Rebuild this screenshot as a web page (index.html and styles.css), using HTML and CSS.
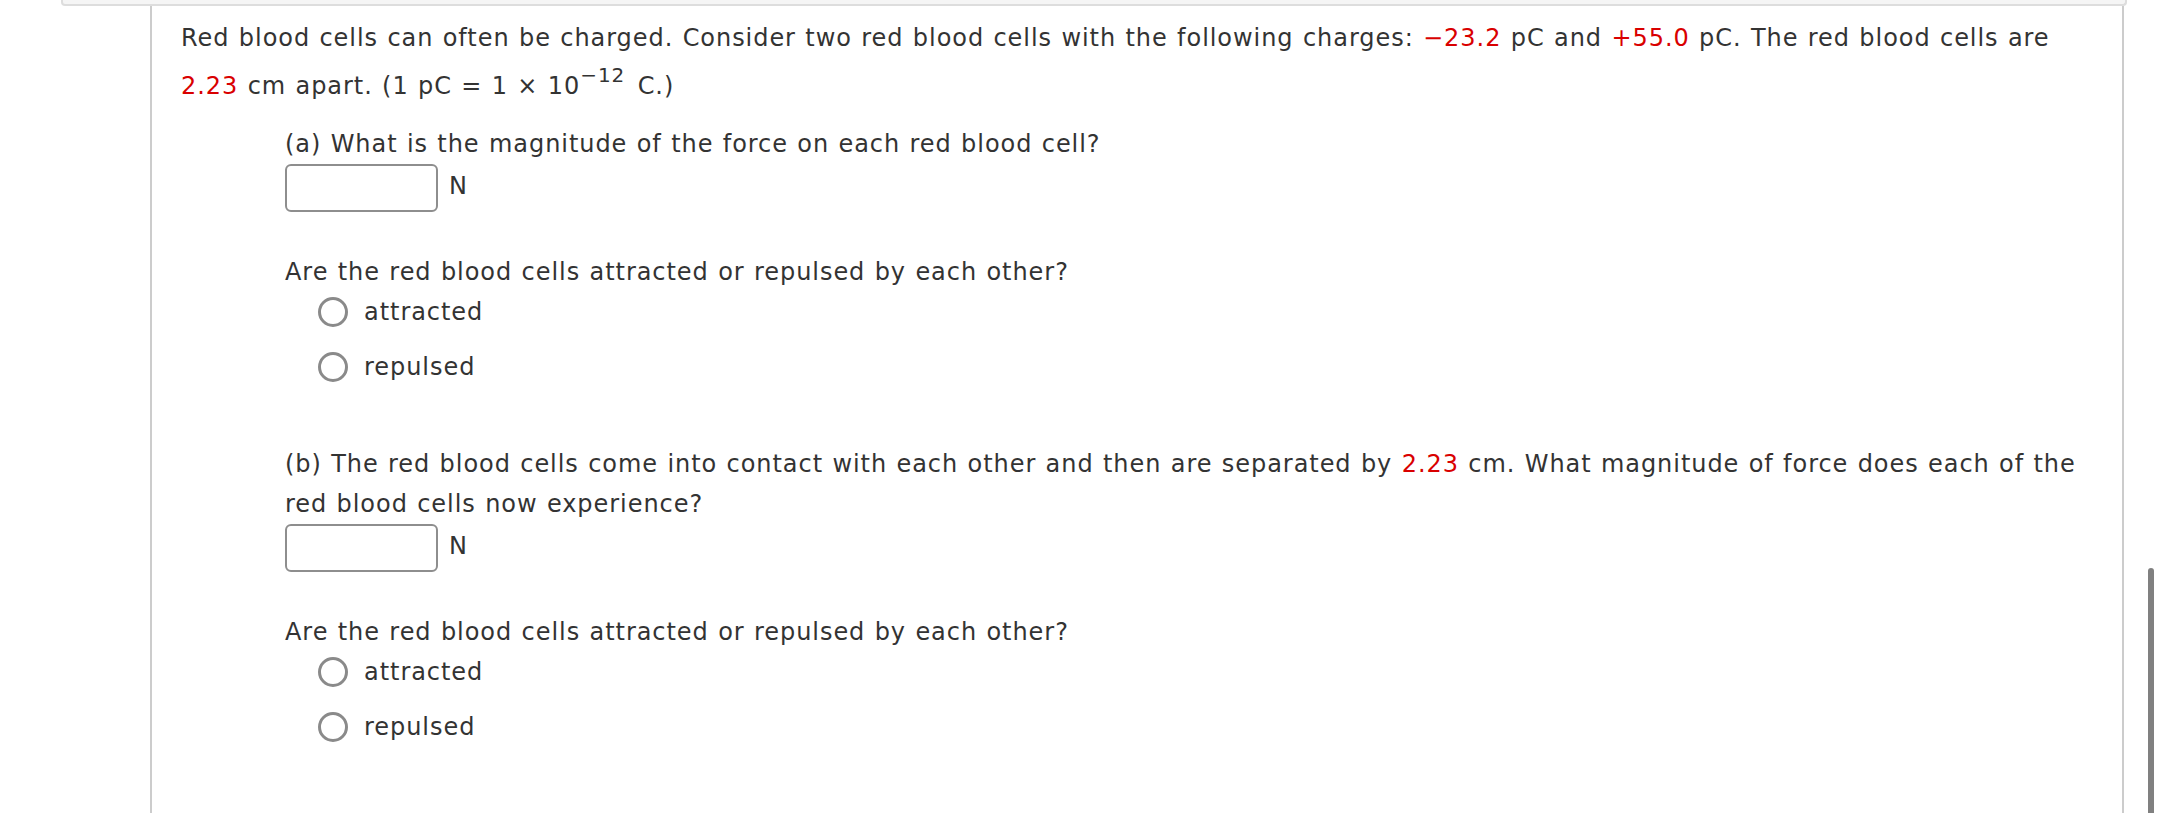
FILE: index.html
```html
<!DOCTYPE html>
<html lang="en">
<head>
<meta charset="utf-8">
<title>Red blood cells</title>
<link rel="stylesheet" href="styles.css">
</head>
<body>
<div class="topbar"></div>
<main class="panel">
  <p class="intro">Red blood cells can often be charged. Consider two red blood cells with the following charges: <span class="val">&minus;23.2</span> pC and <span class="val">+55.0</span> pC. The red blood cells are<br><span class="val">2.23</span> cm apart. (1 pC = 1 &times; 10<sup class="sup">&minus;12</sup> C.)</p>

  <section class="part part-a">
    <p class="line">(a) What is the magnitude of the force on each red blood cell?</p>
    <div class="answer"><span class="box"></span><span class="unit">N</span></div>
    <p class="line question">Are the red blood cells attracted or repulsed by each other?</p>
    <div class="options">
      <label class="option"><span class="radio"></span><span>attracted</span></label>
      <label class="option"><span class="radio"></span><span>repulsed</span></label>
    </div>
  </section>

  <section class="part part-b">
    <p class="line">(b) The red blood cells come into contact with each other and then are separated by <span class="val">2.23</span> cm. What magnitude of force does each of the<br>red blood cells now experience?</p>
    <div class="answer"><span class="box"></span><span class="unit">N</span></div>
    <p class="line question">Are the red blood cells attracted or repulsed by each other?</p>
    <div class="options">
      <label class="option"><span class="radio"></span><span>attracted</span></label>
      <label class="option"><span class="radio"></span><span>repulsed</span></label>
    </div>
  </section>
</main>
<div class="scroll-thumb"></div>
</body>
</html>
```

FILE: styles.css
```css
html, body {
  margin: 0;
  padding: 0;
  background: #ffffff;
  height: 100%;
  overflow: hidden;
}
body {
  font-family: "DejaVu Sans", Verdana, sans-serif;
  font-size: 24px;
  letter-spacing: 0.95px;
  word-spacing: 0.8px;
  color: #333333;
  position: relative;
}
.topbar {
  margin-left: 61px;
  width: 2062px;
  height: 4px;
  background: #f5f5f5;
  border: 2px solid #dddddd;
  border-top: none;
  border-radius: 0 0 4px 4px;
}
.panel {
  margin-left: 150px;
  width: 1974px;
  height: 807px;
  border-left: 2px solid #cccccc;
  border-right: 2px solid #cccccc;
  padding: 8px 0 0 29px;
  box-sizing: border-box;
}
p { margin: 0; }
.intro {
  line-height: 48px;
  white-space: nowrap;
}
.val { color: #d90000; }
.sup {
  font-size: 20px;
  line-height: 0;
  vertical-align: 12px;
  margin-right: 3px;
}
.part {
  margin-left: 104px;
}
.part-a { margin-top: 14px; }
.part-b { margin-top: 57px; }
.line {
  line-height: 40px;
  white-space: nowrap;
}
.answer {
  display: flex;
  align-items: center;
  gap: 11px;
  height: 48px;
}
.box {
  width: 153px;
  height: 48px;
  box-sizing: border-box;
  border: 2px solid #8e8e8e;
  border-radius: 6px;
  background: #fff;
}
.unit {
  line-height: 48px;
  margin-top: -4px;
}
.question { margin-top: 40px; }
.options {
  display: flex;
  flex-direction: column;
  gap: 15px;
  padding-left: 33px;
}
.option {
  display: flex;
  align-items: center;
  gap: 16px;
  height: 40px;
}
.radio {
  width: 30px;
  height: 30px;
  box-sizing: border-box;
  border: 3px solid #8a8a8a;
  border-radius: 50%;
  background: #fff;
}
.scroll-thumb {
  position: absolute;
  left: 2148px;
  top: 568px;
  width: 6px;
  height: 245px;
  background: #808080;
  border-radius: 3px 3px 0 0;
}
```
